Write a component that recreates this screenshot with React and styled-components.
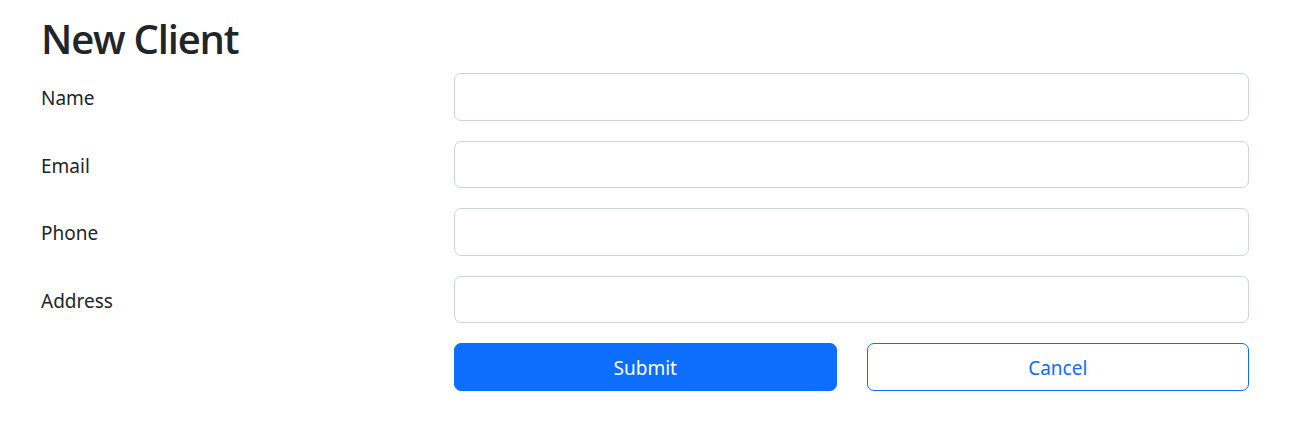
import styled, { createGlobalStyle } from 'styled-components'

const GlobalStyle = createGlobalStyle`
    body {
        margin: 0;
        background: #fff;
        font-family: "Noto Sans", "Open Sans", sans-serif;
        color: #212529;
    }
`

const fields = ['Name', 'Email', 'Phone', 'Address']

const App = () => {
    return (
        <Page>
            <GlobalStyle />
            <Title>New Client</Title>
            <form onSubmit={e => e.preventDefault()}>
                {fields.map(f => (
                    <Row key={f}>
                        <Label htmlFor={f.toLowerCase()}>{f}</Label>
                        <Input id={f.toLowerCase()} type="text" />
                    </Row>
                ))}
                <Row>
                    <span />
                    <Buttons>
                        <Button type="submit" primary>Submit</Button>
                        <Button type="button">Cancel</Button>
                    </Buttons>
                </Row>
            </form>
        </Page>
    )
}

export default App

//styled components

const Page = styled.div`
    padding: 14px 57px 0 41px;
`

const Title = styled.h1`
    margin: 0 0 10px;
    font-family: "Open Sans", "Noto Sans", sans-serif;
    font-size: 40px;
    font-weight: 600;
    line-height: 1.2;
    letter-spacing: -1.2px;
    padding-top: 1px;
`

const Row = styled.div`
    display: grid;
    grid-template-columns: 413px 1fr;
    align-items: center;
    margin-bottom: 20px;
`

const Label = styled.label`
    font-size: 19px;
    line-height: 1.5;
    padding-top: 3px;
`

const Input = styled.input`
    box-sizing: border-box;
    height: 47.5px;
    width: 100%;
    border: 1px solid #ced4da;
    border-radius: 7px;
    font-size: 20px;
    padding: 7px 15px;
    outline: none;
`

const Buttons = styled.div`
    display: grid;
    grid-template-columns: 1fr 1fr;
    column-gap: 30px;
`

const Button = styled.button`
    box-sizing: border-box;
    height: 47.5px;
    border-radius: 7px;
    font-family: inherit;
    font-size: 19px;
    padding-top: 3px;
    cursor: pointer;
    border: 1px solid #0d6efd;
    background: ${p => (p.primary ? '#0d6efd' : '#fff')};
    color: ${p => (p.primary ? '#fff' : '#0d6efd')};
`
